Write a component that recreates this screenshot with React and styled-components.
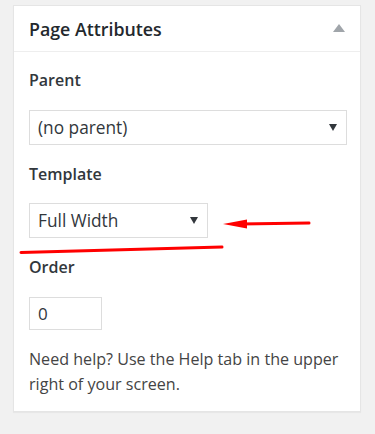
import styled, { createGlobalStyle } from "styled-components";

const GlobalStyle = createGlobalStyle`
  html, body {
    margin: 0;
    padding: 0;
    background: #f1f1f1;
    font-family: "Open Sans", "Liberation Sans", sans-serif;
    color: #444;
  }
`;

const Page = styled.div`
  padding: 5px 14px 22px 13px;
  position: relative;
`;

const Panel = styled.div`
  background: #fff;
  border: 1px solid #e5e5e5;
  box-shadow: 0 1px 1px rgba(0, 0, 0, 0.04);
`;

const PanelHeader = styled.div`
  display: flex;
  align-items: center;
  justify-content: space-between;
  height: 45px;
  padding: 0 15px 0 15px;
  border-bottom: 1px solid #eee;
`;

const PanelTitle = styled.h2`
  margin: 0;
  font-size: 17.8px;
  font-weight: 600;
  color: #23282d;
`;

const Toggle = styled.span`
  width: 0;
  height: 0;
  border-left: 6px solid transparent;
  border-right: 6px solid transparent;
  border-bottom: 8px solid #a0a5aa;
  margin-top: -2px;
`;

const PanelBody = styled.div`
  padding: 18px 15px 14px 15px;
  display: flex;
  flex-direction: column;
  align-items: flex-start;
`;

const Label = styled.div`
  font-size: 16px;
  font-weight: 600;
  line-height: 20px;
  color: #32373c;
  margin-bottom: ${(p) => p.$gap || 20}px;
`;

const SelectBox = styled.div`
  box-sizing: border-box;
  display: flex;
  align-items: center;
  justify-content: space-between;
  width: ${(p) => p.$width};
  height: 35px;
  padding: 0 9px 0 8px;
  border: 1px solid #ddd;
  background: #fff;
  font-size: 17.3px;
  color: #32373c;
  margin-bottom: 19px;
`;

const Caret = styled.span`
  width: 0;
  height: 0;
  border-left: 4px solid transparent;
  border-right: 4px solid transparent;
  border-top: 7px solid #32373c;
`;

const NumberBox = styled.div`
  box-sizing: border-box;
  width: 73px;
  height: 33px;
  padding: 0 8px;
  display: flex;
  align-items: center;
  border: 1px solid #ddd;
  font-size: 17px;
  color: #32373c;
  margin-bottom: 17px;
`;

const HelpText = styled.p`
  margin: 0;
  font-size: 16.1px;
  line-height: 25px;
  color: #444;
`;

const Markup = styled.svg`
  position: absolute;
  left: 0;
  top: 0;
  pointer-events: none;
`;

export default function App() {
  return (
    <>
      <GlobalStyle />
      <Page>
        <Panel>
          <PanelHeader>
            <PanelTitle>Page Attributes</PanelTitle>
            <Toggle />
          </PanelHeader>
          <PanelBody>
            <Label>Parent</Label>
            <SelectBox $width="318px">
              <span>(no parent)</span>
              <Caret />
            </SelectBox>
            <Label $gap={19}>Template</Label>
            <SelectBox $width="179px">
              <span>Full Width</span>
              <Caret />
            </SelectBox>
            <Label>Order</Label>
            <NumberBox>0</NumberBox>
            <HelpText>
              Need help? Use the Help tab in the upper right of your screen.
            </HelpText>
          </PanelBody>
        </Panel>
        <Markup width="375" height="434" viewBox="0 0 375 434">
          <path d="M21 252.5 L222 247" stroke="#ff0000" strokeWidth="3" strokeLinecap="round" fill="none" />
          <path d="M240 224 L309 223" stroke="#ff0000" strokeWidth="3" strokeLinecap="round" fill="none" />
          <path d="M223 224 L247 219.5 L247 228.5 Z" fill="#ff0000" />
        </Markup>
      </Page>
    </>
  );
}
